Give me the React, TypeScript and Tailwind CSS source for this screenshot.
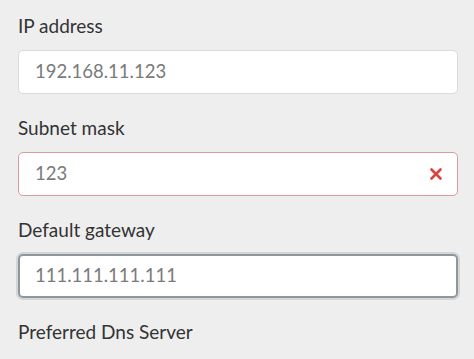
import React from 'react';

function Field({
  label,
  value,
  state = 'default',
}: {
  label: string;
  value: string;
  state?: 'default' | 'error' | 'focus';
}) {
  const box =
    state === 'error'
      ? 'border border-[#dc9a9a]'
      : state === 'focus'
      ? 'border-2 border-[#8f979d] ring-2 ring-[#d3d6d9]'
      : 'border border-[#dadada]';

  return (
    <div className="flex flex-col">
      <label className="text-[19px] leading-[26px] text-[#333333]">{label}</label>
      <div
        className={`mt-[11px] flex h-[44px] items-center rounded-[5px] bg-white ${box} ${
          state === 'focus' ? 'pl-[15px]' : 'pl-[16px]'
        } pr-[14px]`}
      >
        <span className="flex-1 text-[18.5px] text-[#7a7a7a]">{value}</span>
        {state === 'error' && (
          <svg width="12" height="12" viewBox="0 0 12 12" className="mr-[1px]">
            <path d="M1.5 1.5 L10.5 10.5 M10.5 1.5 L1.5 10.5" stroke="#d9453e" strokeWidth="2.6" strokeLinecap="round" />
          </svg>
        )}
      </div>
    </div>
  );
}

export default function App() {
  return (
    <div
      className="h-[359px] w-[474px] overflow-hidden bg-[#eeeeee] pl-[18px] pr-[16px] pt-[13px]"
      style={{ fontFamily: 'Lato, "Open Sans", sans-serif' }}
    >
      <div className="flex flex-col gap-[21px]">
        <Field label="IP address" value="192.168.11.123" />
        <Field label="Subnet mask" value="123" state="error" />
        <Field label="Default gateway" value="111.111.111.111" state="focus" />
        <label className="text-[19px] leading-[26px] text-[#333333]">Preferred Dns Server</label>
      </div>
    </div>
  );
}
